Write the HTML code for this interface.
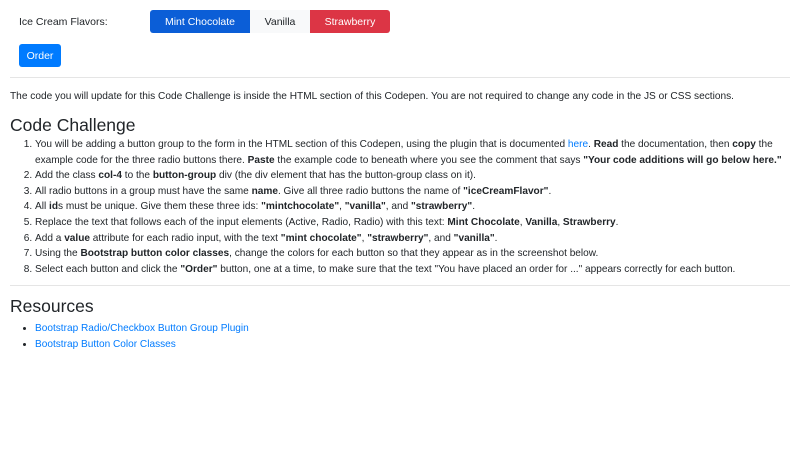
<!DOCTYPE html>
<html><head><style>
body{margin:0;width:800px;height:450px;background:#fff;font-family:"Liberation Sans",sans-serif;color:#212529;font-size:10px;overflow:hidden}
.lbl{position:absolute;left:19px;top:16px;font-size:10.5px}
.bg{position:absolute;left:150px;top:10px;height:23px;display:flex;font-size:10.5px}
.bg div{display:flex;align-items:center;justify-content:center;height:23px}
.o{position:absolute;left:19px;top:44px;width:42px;height:23px;background:#007bff;color:#fff;border-radius:3px;display:flex;align-items:center;justify-content:center;font-size:10.5px}
hr{position:absolute;left:10px;width:780px;margin:0;border:0;border-top:1px solid #e5e5e5}
.p{position:absolute;left:10px;top:91px;font-size:10.15px;white-space:nowrap}
h2{position:absolute;left:10px;margin:0;font-weight:normal;font-size:17.5px}
ol{position:absolute;left:10px;top:137px;margin:0;padding-left:25px;font-size:10.1px;line-height:15.6px;width:760px}
ul{position:absolute;left:10px;top:321px;margin:0;padding-left:25px;font-size:10.1px;line-height:15.5px}
a{color:#007bff;text-decoration:none}
</style></head><body>
<div class="lbl">Ice Cream Flavors:</div>
<div class="bg">
<div style="width:100px;background:#0b5ed7;color:#fff;border-radius:3px 0 0 3px">Mint Chocolate</div>
<div style="width:60px;background:#f8f9fa">Vanilla</div>
<div style="width:80px;background:#dc3545;color:#fff;border-radius:0 3px 3px 0">Strawberry</div>
</div>
<div class="o">Order</div>
<hr style="top:77px">
<div class="p">The code you will update for this Code Challenge is inside the HTML section of this Codepen. You are not required to change any code in the JS or CSS sections.</div>
<h2 style="top:115px">Code Challenge</h2>
<ol>
<li>You will be adding a button group to the form in the HTML section of this Codepen, using the plugin that is documented <a>here</a>. <b>Read</b> the documentation, then <b>copy</b> the example code for the three radio buttons there. <b>Paste</b> the example code to beneath where you see the comment that says <b>"Your code additions will go below here."</b></li>
<li>Add the class <b>col-4</b> to the <b>button-group</b> div (the div element that has the button-group class on it).</li>
<li>All radio buttons in a group must have the same <b>name</b>. Give all three radio buttons the name of <b>"iceCreamFlavor"</b>.</li>
<li>All <b>id</b>s must be unique. Give them these three ids: <b>"mintchocolate"</b>, <b>"vanilla"</b>, and <b>"strawberry"</b>.</li>
<li>Replace the text that follows each of the input elements (Active, Radio, Radio) with this text: <b>Mint Chocolate</b>, <b>Vanilla</b>, <b>Strawberry</b>.</li>
<li>Add a <b>value</b> attribute for each radio input, with the text <b>"mint chocolate"</b>, <b>"strawberry"</b>, and <b>"vanilla"</b>.</li>
<li>Using the <b>Bootstrap button color classes</b>, change the colors for each button so that they appear as in the screenshot below.</li>
<li>Select each button and click the <b>"Order"</b> button, one at a time, to make sure that the text "You have placed an order for ..." appears correctly for each button.</li>
</ol>
<hr style="top:285px">
<h2 style="top:296px">Resources</h2>
<ul>
<li><a>Bootstrap Radio/Checkbox Button Group Plugin</a></li>
<li><a>Bootstrap Button Color Classes</a></li>
</ul>
</body></html>
